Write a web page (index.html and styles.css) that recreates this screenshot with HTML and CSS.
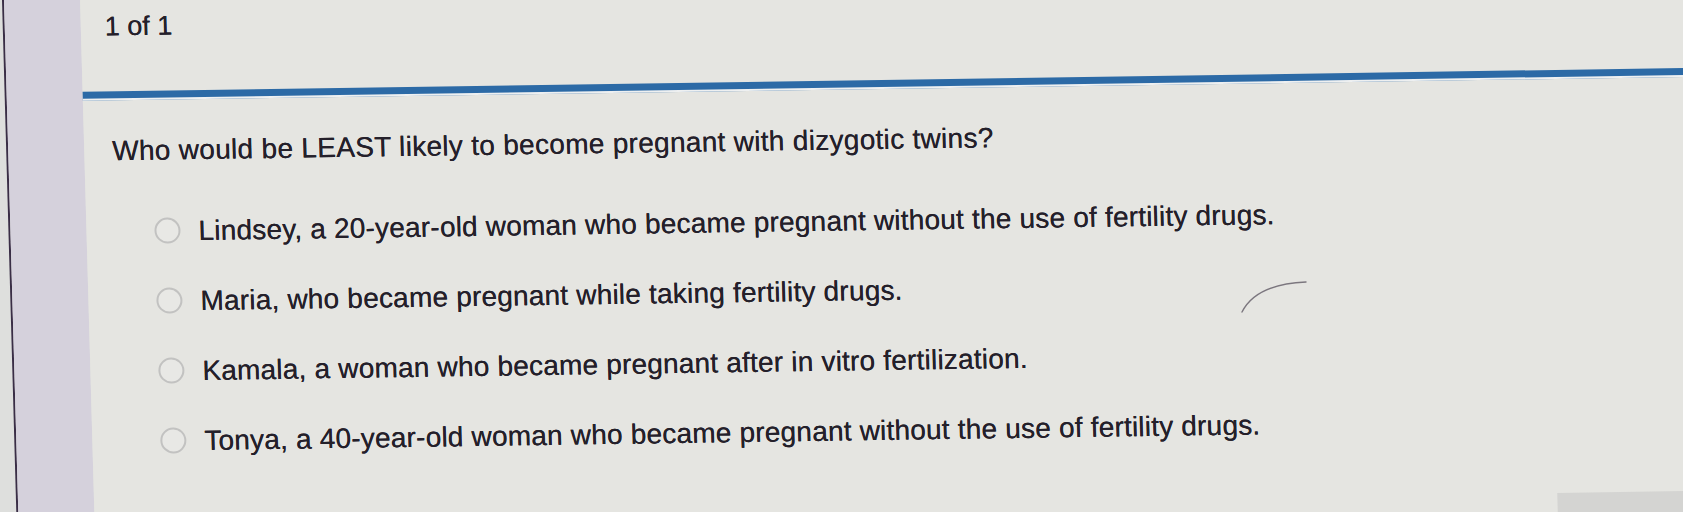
FILE: index.html
```html
<!DOCTYPE html>
<html lang="en">
<head>
<meta charset="utf-8">
<title>Question 1 of 1</title>
<link rel="stylesheet" href="styles.css">
</head>
<body>
<div class="frame">
  <div class="screen">
    <div class="edge"></div>
    <div class="rail"></div>
    <div class="sidebar"></div>
    <main class="main">
      <div class="counter">1 of 1</div>
      <div class="rule"></div>
      <p class="question">Who would be LEAST likely to become pregnant with dizygotic twins?</p>
      <ul class="options">
        <li class="option"><span class="radio"></span><span class="label">Lindsey, a 20-year-old woman who became pregnant without the use of fertility drugs.</span></li>
        <li class="option"><span class="radio"></span><span class="label">Maria, who became pregnant while taking fertility drugs.</span></li>
        <li class="option"><span class="radio"></span><span class="label">Kamala, a woman who became pregnant after in vitro fertilization.</span></li>
        <li class="option"><span class="radio"></span><span class="label">Tonya, a 40-year-old woman who became pregnant without the use of fertility drugs.</span></li>
      </ul>
      <div class="footer"><div class="next-box"></div></div>
    </main>
  </div>
  <svg class="mark" width="1683" height="512" viewBox="0 0 1683 512" aria-hidden="true">
    <path d="M1242 312 Q1256 284 1306 282" fill="none" stroke="#7b767e" stroke-width="1.4" stroke-linecap="round"/>
  </svg>
</div>
</body>
</html>
```
FILE: styles.css
```css
html, body {
  margin: 0;
  padding: 0;
  overflow: hidden;
}
body {
  width: 1683px;
  height: 512px;
  background: #dedfdd;
  font-family: "Liberation Sans", Arial, Helvetica, sans-serif;
  color: #24202a;
}
.frame {
  position: relative;
  width: 1683px;
  height: 512px;
  overflow: hidden;
  background: #dedfdd;
}
.screen {
  display: flex;
  width: 1730px;
  height: 570px;
  transform-origin: 0 0;
  transform: rotate(-0.85deg) skewX(0.75deg);
}
.edge {
  width: 2px;
  background: #dedfdd;
}
.rail {
  width: 2px;
  background: #3a2e46;
}
.sidebar {
  width: 76px;
  background: #d5d1dc;
}
.main {
  flex: 1;
  display: flex;
  flex-direction: column;
  background: #e5e5e1;
}
.counter {
  height: 93px;
  box-sizing: border-box;
  padding: 13px 0 0 24px;
  font-size: 27px;
  line-height: 30px;
  text-shadow: 0 0 0.3px #24202a;
}
.rule {
  height: 7px;
  background: #2c6aa6;
  border-bottom: 2px solid #eef0f1;
}
.question {
  margin: 35px 0 0 28px;
  font-size: 28px;
  line-height: 32px;
  letter-spacing: 0.3px;
  text-shadow: 0 0 0.3px #24202a;
}
.options {
  list-style: none;
  margin: 49px 0 0 0;
  padding: 0 0 0 68px;
  display: flex;
  flex-direction: column;
  gap: 38px;
}
.option {
  display: flex;
  align-items: center;
  height: 32px;
  font-size: 28px;
  line-height: 32px;
  letter-spacing: 0.2px;
  text-shadow: 0 0 0.3px #24202a;
}
.radio {
  width: 26px;
  height: 26px;
  box-sizing: border-box;
  border: 2px solid #c2c2c1;
  border-radius: 50%;
  background: #e8e8e5;
  margin-right: 18px;
  flex: none;
  position: relative;
  top: -1px;
}
.footer {
  margin-top: auto;
  display: flex;
  justify-content: flex-end;
}
.next-box {
  width: 187px;
  height: 54px;
  background: #d4d4d2;
}
.mark {
  position: absolute;
  left: 0;
  top: 0;
  pointer-events: none;
}
```
